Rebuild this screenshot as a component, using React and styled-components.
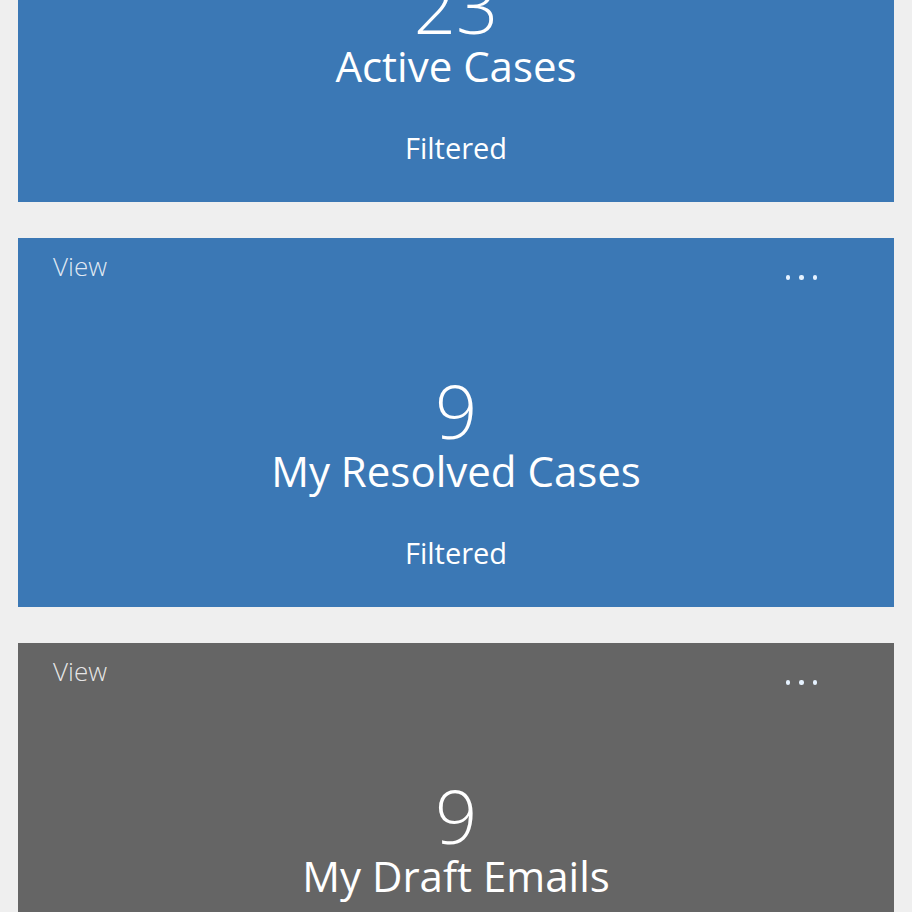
import React from "react";
import styled, { createGlobalStyle } from "styled-components";

const tiles = [
  { id: "active", label: "View", count: 23, title: "Active Cases", note: "Filtered", tone: "blue" },
  { id: "resolved", label: "View", count: 9, title: "My Resolved Cases", note: "Filtered", tone: "blue" },
  { id: "drafts", label: "View", count: 9, title: "My Draft Emails", note: "", tone: "gray" },
];

const tones = {
  blue: "#3b78b5",
  gray: "#656565",
};

const App = () => (
  <>
    <GlobalStyle />
    <Page>
      <List>
        {tiles.map(({ id, label, count, title, note, tone }) => (
          <Tile key={id} $tone={tone}>
            <Header>
              <Label>{label}</Label>
              <More aria-label="More options">
                <Dot />
                <Dot />
                <Dot />
              </More>
            </Header>
            <Body>
              <Count>{count}</Count>
              <Title>{title}</Title>
              {note && <Note>{note}</Note>}
            </Body>
          </Tile>
        ))}
      </List>
    </Page>
  </>
);

export default App;

const GlobalStyle = createGlobalStyle`
  html, body {
    margin: 0;
    background: #efefef;
    overflow: hidden;
  }

  body {
    font-family: "Open Sans", "Noto Sans", sans-serif;
    color: #fff;
  }
`;

const Page = styled.div`
  height: 912px;
  overflow: hidden;
`;

const List = styled.div`
  display: flex;
  flex-direction: column;
  gap: 36px;
  padding: 0 18px;
  margin-top: -167px;
`;

const Tile = styled.section`
  height: 369px;
  flex-shrink: 0;
  display: flex;
  flex-direction: column;
  background: ${({ $tone }) => tones[$tone]};
`;

const Header = styled.div`
  display: flex;
  justify-content: space-between;
  align-items: flex-start;
  padding: 15px 77px 0 35px;
  height: 26px;
`;

const Label = styled.span`
  font-size: 26px;
  line-height: 26px;
  font-weight: 300;
  color: rgba(255, 255, 255, 0.85);
`;

const More = styled.div`
  display: flex;
  gap: 9px;
  padding-top: 22px;
`;

const Dot = styled.span`
  width: 4.5px;
  height: 4.5px;
  border-radius: 50%;
  background: #e6f2ff;
`;

const Body = styled.div`
  display: flex;
  flex-direction: column;
  align-items: center;
  margin-top: 96px;
`;

const Count = styled.div`
  font-size: 74px;
  line-height: 72px;
  font-weight: 300;
`;

const Title = styled.div`
  margin-top: 3px;
  font-size: 42px;
  line-height: 42px;
  font-weight: 400;
`;

const Note = styled.div`
  margin-top: 46px;
  font-size: 29px;
  line-height: 29px;
  font-weight: 400;
`;
